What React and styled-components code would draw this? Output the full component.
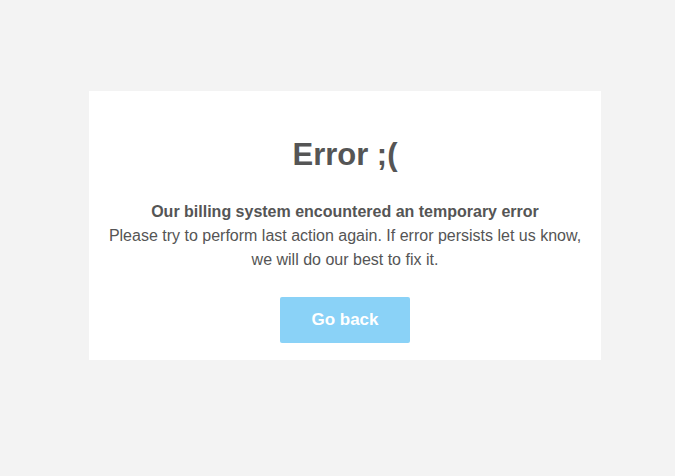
import React from 'react';
import styled, {createGlobalStyle} from 'styled-components';

const GlobalStyle = createGlobalStyle`
  html, body {
    margin: 0;
    padding: 0;
    background: #f3f3f3;
    font-family: "Liberation Sans", Arial, Helvetica, sans-serif;
  }
`;

const Page = styled.div`
  min-height: 476px;
  padding: 91px 0 0 89px;
  box-sizing: border-box;
`;

const Card = styled.div`
  width: 512px;
  box-sizing: border-box;
  background: #fff;
  padding: 46px 10px 17px;
  display: flex;
  flex-direction: column;
  align-items: center;
  color: #555;
  text-align: center;
`;

const Title = styled.h1`
  margin: 0;
  font-size: 31px;
  line-height: 35px;
  font-weight: bold;
`;

const Message = styled.p`
  margin: 28px 0 25px;
  font-size: 16px;
  line-height: 24px;
`;

const Strong = styled.strong`
  font-weight: bold;
`;

const Button = styled.button`
  width: 130px;
  height: 46px;
  border: 0;
  border-radius: 2px;
  background: #8ad2f7;
  color: #fff;
  font-family: inherit;
  font-size: 17px;
  font-weight: bold;
  cursor: pointer;
`;

const App = () => (
  <Page>
    <GlobalStyle />
    <Card>
      <Title>Error ;(</Title>
      <Message>
        <Strong>Our billing system encountered an temporary error</Strong>
        <br />
        Please try to perform last action again. If error persists let us know,
        <br />
        we will do our best to fix it.
      </Message>
      <Button>Go back</Button>
    </Card>
  </Page>
);

export default App;
